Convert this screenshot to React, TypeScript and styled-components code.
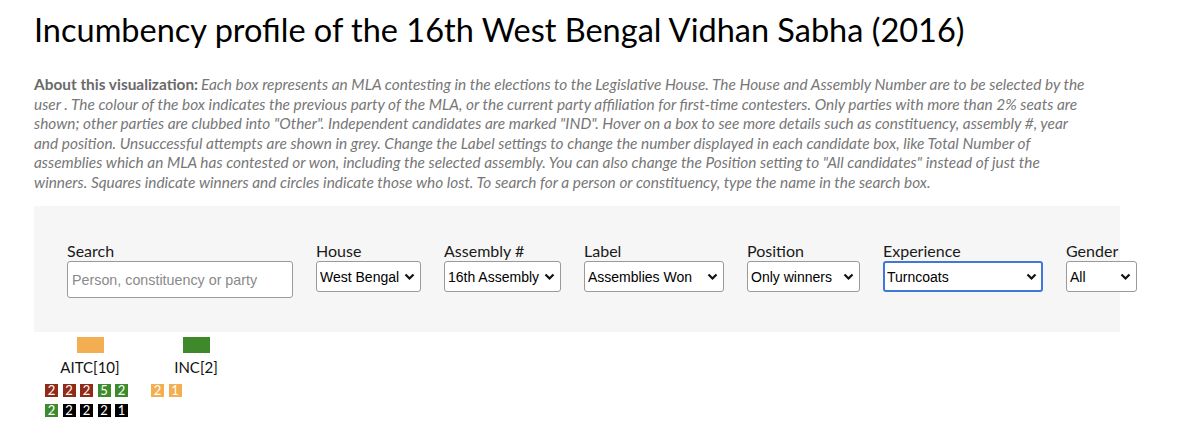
import React from "react";
import styled, { createGlobalStyle } from "styled-components";

const GlobalStyle = createGlobalStyle`
  body {
    margin: 0;
    background: #ffffff;
    font-family: "Lato", "Open Sans", sans-serif;
    color: #111;
  }
`;

const Page = styled.div`
  padding: 10px 0 0 34px;
  width: 1166px;
  box-sizing: border-box;
`;

const Title = styled.h1`
  margin: 0;
  font-size: 32.5px;
  font-weight: 400;
  line-height: 40px;
  color: #000;
`;

const About = styled.p`
  margin: 25px 0 0;
  width: 1056px;
  font-size: 15.4px;
  line-height: 19.5px;
  color: #777;
  font-style: italic;
`;

const AboutLead = styled.span`
  font-style: normal;
  font-weight: 700;
  color: #6a6a6a;
  margin-right: 3px;
`;

const Panel = styled.div`
  margin-top: 14px;
  width: 1086px;
  height: 126px;
  box-sizing: border-box;
  padding: 34px 0 0 33px;
  background: #f6f6f6;
  display: flex;
  align-items: flex-start;
  gap: 23px;
`;

const Field = styled.div`
  display: flex;
  flex-direction: column;
  flex-shrink: 0;
`;

const FieldLabel = styled.label`
  font-size: 16px;
  line-height: 21px;
  color: #1a1a1a;
`;

const SearchInput = styled.input`
  width: 226px;
  height: 37px;
  box-sizing: border-box;
  border: 1px solid #9a9a9a;
  border-radius: 3px;
  padding: 0 4px;
  font-family: "Liberation Sans", Arial, sans-serif;
  font-size: 14.3px;
  background: #fff;
  outline: none;
  &::placeholder {
    color: #8a8a8a;
  }
`;

const SelectWrap = styled.div<{ $w: number }>`
  position: relative;
  width: ${(p) => p.$w}px;
  height: 31px;
`;

const Select = styled.select<{ $focus?: boolean }>`
  appearance: none;
  width: 100%;
  height: 100%;
  box-sizing: border-box;
  border: ${(p) => (p.$focus ? "2px solid #3f78d8" : "1px solid #9a9a9a")};
  border-radius: 3px;
  padding: 0 0 0 ${(p) => (p.$focus ? "2px" : "3px")};
  background: #fff;
  font-family: "Liberation Sans", Arial, sans-serif;
  font-size: 14px;
  color: #000;
  outline: none;
`;

const Chevron = styled.svg`
  position: absolute;
  right: 6px;
  top: 11px;
  width: 11px;
  height: 9px;
  pointer-events: none;
`;

const Legend = styled.div`
  display: flex;
  gap: 16px;
  padding: 5px 0 0 11px;
`;

const PartyCol = styled.div`
  width: 90px;
  display: flex;
  flex-direction: column;
`;

const Swatch = styled.div<{ $c: string }>`
  width: 27px;
  height: 16px;
  background: ${(p) => p.$c};
  align-self: center;
`;

const PartyName = styled.div`
  text-align: center;
  font-size: 15px;
  line-height: 18px;
  margin-top: 5px;
  color: #111;
`;

const Boxes = styled.div`
  display: grid;
  grid-template-columns: repeat(5, 13px);
  column-gap: 4.5px;
  row-gap: 7px;
  margin-top: 8px;
`;

const Box = styled.div<{ $c: string }>`
  width: 13px;
  height: 13px;
  background: ${(p) => p.$c};
  color: #fff;
  font-size: 13px;
  line-height: 13px;
  text-align: center;
`;

const RED = "#8f2b17";
const GREEN = "#3d8b2c";
const BLACK = "#000";
const ORANGE = "#f2ae50";

const selects = [
  { label: "House", value: "West Bengal", w: 105 },
  { label: "Assembly #", value: "16th Assembly", w: 117 },
  { label: "Label", value: "Assemblies Won", w: 140 },
  { label: "Position", value: "Only winners", w: 113 },
  { label: "Experience", value: "Turncoats", w: 160, focus: true },
  { label: "Gender", value: "All", w: 71 },
];

const parties = [
  {
    name: "AITC[10]",
    color: ORANGE,
    boxes: [
      ["2", RED], ["2", RED], ["2", RED], ["5", GREEN], ["2", GREEN],
      ["2", GREEN], ["2", BLACK], ["2", BLACK], ["2", BLACK], ["1", BLACK],
    ],
  },
  {
    name: "INC[2]",
    color: "#3e8a2a",
    boxes: [["2", ORANGE], ["1", ORANGE]],
  },
];

const App: React.FC = () => {
  return (
    <>
      <GlobalStyle />
      <Page>
        <Title>Incumbency profile of the 16th West Bengal Vidhan Sabha (2016)</Title>
        <About>
          <AboutLead>About this visualization:</AboutLead>Each box represents an MLA contesting in
          the elections to the Legislative House. The House and Assembly Number are to be selected
          by the user . The colour of the box indicates the previous party of the MLA, or the
          current party affiliation for first-time contesters. Only parties with more than 2% seats
          are shown; other parties are clubbed into "Other". Independent candidates are marked
          "IND". Hover on a box to see more details such as constituency, assembly #, year and
          position. Unsuccessful attempts are shown in grey. Change the Label settings to change the
          number displayed in each candidate box, like Total Number of assemblies which an MLA has
          contested or won, including the selected assembly. You can also change the Position
          setting to "All candidates" instead of just the winners. Squares indicate winners and
          circles indicate those who lost. To search for a person or constituency, type the name in
          the search box.
        </About>
        <Panel>
          <Field>
            <FieldLabel>Search</FieldLabel>
            <SearchInput placeholder="Person, constituency or party" />
          </Field>
          {selects.map((s) => (
            <Field key={s.label}>
              <FieldLabel>{s.label}</FieldLabel>
              <SelectWrap $w={s.w}>
                <Select $focus={s.focus} defaultValue={s.value}>
                  <option>{s.value}</option>
                </Select>
                <Chevron viewBox="0 0 11 9">
                  <path d="M1.5 2.5 L5.5 6.5 L9.5 2.5" fill="none" stroke="#111" strokeWidth="2.2" />
                </Chevron>
              </SelectWrap>
            </Field>
          ))}
        </Panel>
        <Legend>
          {parties.map((p) => (
            <PartyCol key={p.name}>
              <Swatch $c={p.color} />
              <PartyName>{p.name}</PartyName>
              <Boxes>
                {p.boxes.map(([n, c], i) => (
                  <Box key={i} $c={c}>
                    {n}
                  </Box>
                ))}
              </Boxes>
            </PartyCol>
          ))}
        </Legend>
      </Page>
    </>
  );
};

export default App;
